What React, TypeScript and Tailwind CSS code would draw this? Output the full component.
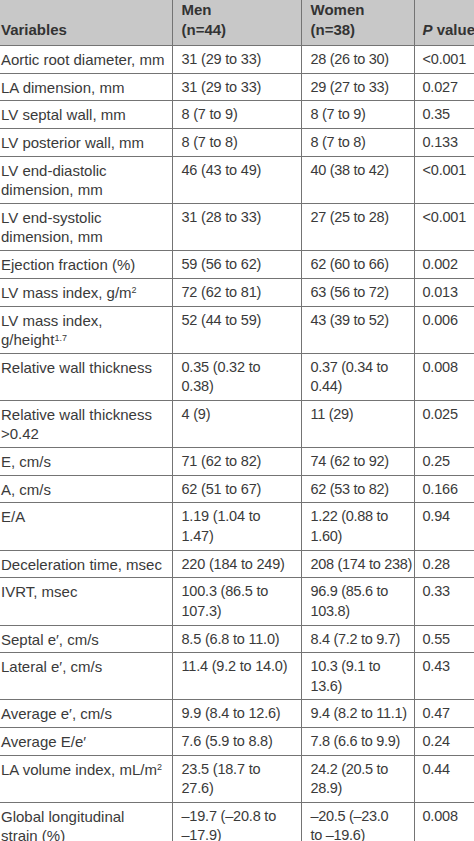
import React from 'react';

interface Linha {
  variavel: React.ReactNode;
  homens: string;
  mulheres: string;
  p: string;
}

const Sup = ({ children }: { children: React.ReactNode }) => (
  <sup className="text-[9px]">{children}</sup>
);

const linhas: Linha[] = [
  { variavel: 'Aortic root diameter, mm', homens: '31 (29 to 33)', mulheres: '28 (26 to 30)', p: '<0.001' },
  { variavel: 'LA dimension, mm', homens: '31 (29 to 33)', mulheres: '29 (27 to 33)', p: '0.027' },
  { variavel: 'LV septal wall, mm', homens: '8 (7 to 9)', mulheres: '8 (7 to 9)', p: '0.35' },
  { variavel: 'LV posterior wall, mm', homens: '8 (7 to 8)', mulheres: '8 (7 to 8)', p: '0.133' },
  { variavel: 'LV end-diastolic\ndimension, mm', homens: '46 (43 to 49)', mulheres: '40 (38 to 42)', p: '<0.001' },
  { variavel: 'LV end-systolic\ndimension, mm', homens: '31 (28 to 33)', mulheres: '27 (25 to 28)', p: '<0.001' },
  { variavel: 'Ejection fraction (%)', homens: '59 (56 to 62)', mulheres: '62 (60 to 66)', p: '0.002' },
  { variavel: <>LV mass index, g/m<Sup>2</Sup></>, homens: '72 (62 to 81)', mulheres: '63 (56 to 72)', p: '0.013' },
  { variavel: <>LV mass index,{'\n'}g/height<Sup>1.7</Sup></>, homens: '52 (44 to 59)', mulheres: '43 (39 to 52)', p: '0.006' },
  { variavel: 'Relative wall thickness', homens: '0.35 (0.32 to\n0.38)', mulheres: '0.37 (0.34 to\n0.44)', p: '0.008' },
  { variavel: 'Relative wall thickness\n>0.42', homens: '4 (9)', mulheres: '11 (29)', p: '0.025' },
  { variavel: 'E, cm/s', homens: '71 (62 to 82)', mulheres: '74 (62 to 92)', p: '0.25' },
  { variavel: 'A, cm/s', homens: '62 (51 to 67)', mulheres: '62 (53 to 82)', p: '0.166' },
  { variavel: 'E/A', homens: '1.19 (1.04 to\n1.47)', mulheres: '1.22 (0.88 to\n1.60)', p: '0.94' },
  { variavel: 'Deceleration time, msec', homens: '220 (184 to 249)', mulheres: '208 (174 to 238)', p: '0.28' },
  { variavel: 'IVRT, msec', homens: '100.3 (86.5 to\n107.3)', mulheres: '96.9 (85.6 to\n103.8)', p: '0.33' },
  { variavel: 'Septal e′, cm/s', homens: '8.5 (6.8 to 11.0)', mulheres: '8.4 (7.2 to 9.7)', p: '0.55' },
  { variavel: 'Lateral e′, cm/s', homens: '11.4 (9.2 to 14.0)', mulheres: '10.3 (9.1 to\n13.6)', p: '0.43' },
  { variavel: 'Average e′, cm/s', homens: '9.9 (8.4 to 12.6)', mulheres: '9.4 (8.2 to 11.1)', p: '0.47' },
  { variavel: 'Average E/e′', homens: '7.6 (5.9 to 8.8)', mulheres: '7.8 (6.6 to 9.9)', p: '0.24' },
  { variavel: <>LA volume index, mL/m<Sup>2</Sup></>, homens: '23.5 (18.7 to\n27.6)', mulheres: '24.2 (20.5 to\n28.9)', p: '0.44' },
  { variavel: 'Global longitudinal\nstrain (%)', homens: '–19.7 (–20.8 to\n–17.9)', mulheres: '–20.5 (–23.0\nto –19.6)', p: '0.008' },
];

// rows: text sits at the top, two-line cells make the row taller
const celula = 'border border-[#747474] align-top pt-[4px] pb-[3.2px] whitespace-pre';
const cabecalho = 'border-x border-b border-[#747474] align-bottom pt-0 pb-[6px] font-bold text-[15px] text-[#333] whitespace-pre';

const App = () => {
  return (
    <div className="w-[474px] h-[841px] overflow-hidden bg-white">
      <table className="table-fixed border-collapse w-[504px] font-['Liberation_Sans',Arial,sans-serif] text-[14.5px] leading-[19.5px] text-[#3a3a3a]">
        <colgroup>
          <col className="w-[172px]" />
          <col className="w-[129px]" />
          <col className="w-[113px]" />
          <col className="w-[90px]" />
        </colgroup>
        <thead>
          <tr className="bg-[#c8c8c8]">
            <th className={`${cabecalho} text-left pl-[1px] border-l-0`}>Variables</th>
            <th className={`${cabecalho} text-left pl-[9px]`}>{'Men\n(n=44)'}</th>
            <th className={`${cabecalho} text-left pl-[9px]`}>{'Women\n(n=38)'}</th>
            <th className={`${cabecalho} text-left pl-[8px]`}>
              <i>P</i> value
            </th>
          </tr>
        </thead>
        <tbody>
          {linhas.map((linha, index) => (
            <tr key={index}>
              <td className={`${celula} pl-[1px] border-l-0 text-[15px]`}>{linha.variavel}</td>
              <td className={`${celula} pl-[9px] tracking-[-0.2px]`}>{linha.homens}</td>
              <td className={`${celula} pl-[9px] tracking-[-0.3px]`}>{linha.mulheres}</td>
              <td className={`${celula} pl-[8px] tracking-[-0.2px]`}>{linha.p}</td>
            </tr>
          ))}
        </tbody>
      </table>
    </div>
  );
};

export default App;
